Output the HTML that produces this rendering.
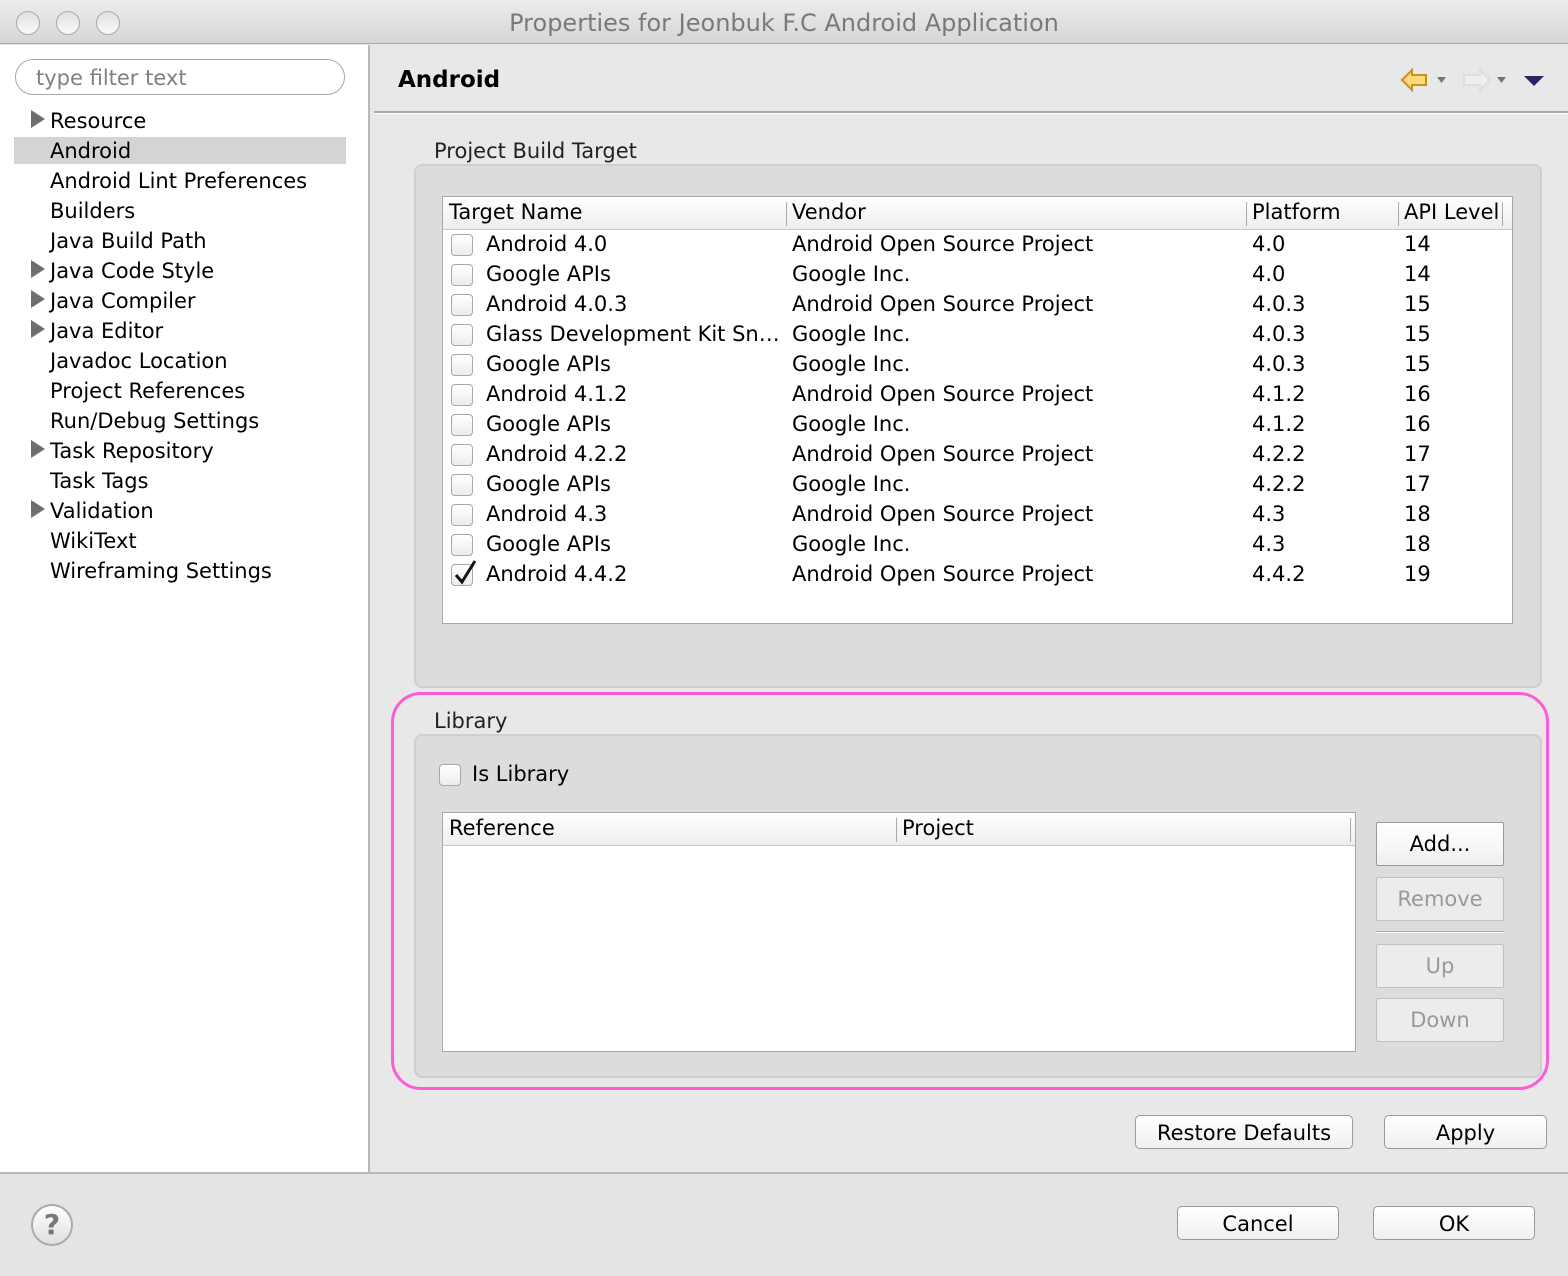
<!DOCTYPE html>
<html><head><style>
*{box-sizing:border-box;margin:0;padding:0}
body{width:1568px;height:1276px;background:#e8e8e8;font-family:"DejaVu Sans","Liberation Sans",sans-serif;font-size:20px;color:#000;position:relative;overflow:hidden}
.a{position:absolute;white-space:nowrap}
.cb{position:absolute;width:22px;height:22px;border:1px solid #a8a8a8;border-radius:4px;background:linear-gradient(#fff,#ececec)}
.btn{position:absolute;height:34px;border:1px solid #9a9a9a;border-radius:5px;background:linear-gradient(#fff,#f0f0f0);text-align:center;line-height:34px;font-size:21px}
.dis{color:#999;border-color:#c0c0c0;background:#ececec}
.tri{position:absolute;width:0;height:0;border-top:9px solid transparent;border-bottom:9px solid transparent;border-left:14px solid #6e6e6e}
</style></head><body>
<div class="a" style="left:0;top:0;width:1568px;height:44px;background:linear-gradient(#ececec,#d6d6d6);border-bottom:1px solid #aaa"></div>
<div class="a" style="left:16px;top:11px;width:24px;height:24px;border-radius:50%;border:1px solid #a9a9a9;background:linear-gradient(#e0e0e0,#fafafa)"></div>
<div class="a" style="left:56px;top:11px;width:24px;height:24px;border-radius:50%;border:1px solid #a9a9a9;background:linear-gradient(#e0e0e0,#fafafa)"></div>
<div class="a" style="left:96px;top:11px;width:24px;height:24px;border-radius:50%;border:1px solid #a9a9a9;background:linear-gradient(#e0e0e0,#fafafa)"></div>
<div class="a" style="left:0;width:1568px;top:9px;text-align:center;font-size:24px;color:#7a7a7a">Properties for Jeonbuk F.C Android Application</div>

<div class="a" style="left:0;top:45px;width:370px;height:1127px;background:#fff;border-right:2px solid #b8b8b8"></div>
<div class="a" style="left:15px;top:59px;width:330px;height:36px;border:1px solid #a8a8a8;border-radius:18px;background:#fff"></div>
<div class="a" style="left:36px;top:66px;font-size:21px;color:#808080">type filter text</div>
<div class="a" style="left:14px;top:137px;width:332px;height:27px;background:#d4d4d4"></div>
<div class="tri" style="left:31px;top:110px"></div>
<div class="tri" style="left:31px;top:260px"></div>
<div class="tri" style="left:31px;top:290px"></div>
<div class="tri" style="left:31px;top:320px"></div>
<div class="tri" style="left:31px;top:440px"></div>
<div class="tri" style="left:31px;top:500px"></div>
<div class="a" style="left:50px;top:106px;line-height:30px;font-size:21px">Resource<br>Android<br>Android Lint Preferences<br>Builders<br>Java Build Path<br>Java Code Style<br>Java Compiler<br>Java Editor<br>Javadoc Location<br>Project References<br>Run/Debug Settings<br>Task Repository<br>Task Tags<br>Validation<br>WikiText<br>Wireframing Settings</div>

<div class="a" style="left:398px;top:67px;font-size:23px;font-weight:bold">Android</div>
<div class="a" style="left:374px;top:111px;width:1194px;height:3px;border-top:2px solid #a8a8a8;border-bottom:1px solid #fff"></div>
<svg class="a" style="left:1398px;top:64px" width="160" height="32"><path d="M4 16 L14 6 V11 H28 V21 H14 V26 Z" fill="#ffd97a" stroke="#c89020" stroke-width="2"/><path d="M39 13 h9 l-4.5 6z" fill="#777"/><path d="M92 16 L82 6 V11 H66 V21 H82 V26 Z" fill="#eee" stroke="#ddd" stroke-width="2"/><path d="M99 13 h9 l-4.5 6z" fill="#777"/><path d="M126 12 h20 l-10 10z" fill="#2a2560"/></svg>

<div class="a" style="left:434px;top:139px;font-size:21px;color:#222">Project Build Target</div>
<div class="a" style="left:414px;top:164px;width:1128px;height:524px;border:2px solid #cfcfcf;border-radius:8px;background:#dcdcdc"></div>
<div class="a" style="left:442px;top:196px;width:1071px;height:428px;border:1px solid #a8a8a8;background:#fff"></div>
<div class="a" style="left:443px;top:197px;width:1069px;height:33px;background:linear-gradient(#fff,#eee);border-bottom:1px solid #c8c8c8"></div>
<div class="a" style="left:786px;top:202px;width:1px;height:24px;background:#aaa"></div>
<div class="a" style="left:1246px;top:202px;width:1px;height:24px;background:#aaa"></div>
<div class="a" style="left:1398px;top:202px;width:1px;height:24px;background:#aaa"></div>
<div class="a" style="left:1502px;top:202px;width:1px;height:24px;background:#aaa"></div>
<div class="a" style="left:449px;top:200px;font-size:21px">Target Name</div>
<div class="a" style="left:792px;top:200px;font-size:21px">Vendor</div>
<div class="a" style="left:1252px;top:200px;font-size:21px">Platform</div>
<div class="a" style="left:1404px;top:200px;font-size:21px">API Level</div>
<div class="cb" style="left:451px;top:234px"></div><div class="cb" style="left:451px;top:264px"></div><div class="cb" style="left:451px;top:294px"></div><div class="cb" style="left:451px;top:324px"></div><div class="cb" style="left:451px;top:354px"></div><div class="cb" style="left:451px;top:384px"></div><div class="cb" style="left:451px;top:414px"></div><div class="cb" style="left:451px;top:444px"></div><div class="cb" style="left:451px;top:474px"></div><div class="cb" style="left:451px;top:504px"></div><div class="cb" style="left:451px;top:534px"></div><div class="cb" style="left:451px;top:564px"></div>
<svg class="a" style="left:451px;top:558px" width="28" height="28"><path d="M5 17 L11 24 L24 3" fill="none" stroke="#111" stroke-width="3"/></svg>
<div class="a" style="left:486px;top:229px;line-height:30px;font-size:21px">Android 4.0<br>Google APIs<br>Android 4.0.3<br>Glass Development Kit Sn…<br>Google APIs<br>Android 4.1.2<br>Google APIs<br>Android 4.2.2<br>Google APIs<br>Android 4.3<br>Google APIs<br>Android 4.4.2</div>
<div class="a" style="left:792px;top:229px;line-height:30px;font-size:21px">Android Open Source Project<br>Google Inc.<br>Android Open Source Project<br>Google Inc.<br>Google Inc.<br>Android Open Source Project<br>Google Inc.<br>Android Open Source Project<br>Google Inc.<br>Android Open Source Project<br>Google Inc.<br>Android Open Source Project</div>
<div class="a" style="left:1252px;top:229px;line-height:30px;font-size:21px">4.0<br>4.0<br>4.0.3<br>4.0.3<br>4.0.3<br>4.1.2<br>4.1.2<br>4.2.2<br>4.2.2<br>4.3<br>4.3<br>4.4.2</div>
<div class="a" style="left:1404px;top:229px;line-height:30px;font-size:21px">14<br>14<br>15<br>15<br>15<br>16<br>16<br>17<br>17<br>18<br>18<br>19</div>

<div class="a" style="left:434px;top:709px;font-size:21px;color:#222">Library</div>
<div class="a" style="left:414px;top:734px;width:1128px;height:344px;border:2px solid #cfcfcf;border-radius:8px;background:#dcdcdc"></div>
<div class="cb" style="left:439px;top:764px"></div>
<div class="a" style="left:472px;top:762px;font-size:21px">Is Library</div>
<div class="a" style="left:442px;top:812px;width:914px;height:240px;border:1px solid #a8a8a8;background:#fff"></div>
<div class="a" style="left:443px;top:813px;width:912px;height:33px;background:linear-gradient(#fff,#eee);border-bottom:1px solid #c8c8c8"></div>
<div class="a" style="left:896px;top:818px;width:1px;height:24px;background:#aaa"></div>
<div class="a" style="left:1350px;top:818px;width:1px;height:24px;background:#aaa"></div>
<div class="a" style="left:449px;top:816px;font-size:21px">Reference</div>
<div class="a" style="left:902px;top:816px;font-size:21px">Project</div>
<div class="btn" style="left:1376px;top:822px;width:128px;height:44px;line-height:42px;border-radius:2px">Add...</div>
<div class="btn dis" style="left:1376px;top:877px;width:128px;height:44px;line-height:42px;border-radius:2px">Remove</div>
<div class="a" style="left:1376px;top:931px;width:128px;height:2px;border-top:1px solid #aaa;border-bottom:1px solid #fff"></div>
<div class="btn dis" style="left:1376px;top:944px;width:128px;height:44px;line-height:42px;border-radius:2px">Up</div>
<div class="btn dis" style="left:1376px;top:998px;width:128px;height:44px;line-height:42px;border-radius:2px">Down</div>
<div class="a" style="left:391px;top:692px;width:1158px;height:398px;border:3px solid #ff5bd6;border-radius:30px"></div>

<div class="btn" style="left:1135px;top:1115px;width:218px">Restore Defaults</div>
<div class="btn" style="left:1384px;top:1115px;width:163px">Apply</div>

<div class="a" style="left:0;top:1172px;width:1568px;height:104px;background:#e4e4e4;border-top:2px solid #b8b8b8"></div>
<div class="a" style="left:31px;top:1204px;width:42px;height:42px;border-radius:50%;border:2px solid #aaa;background:linear-gradient(#fff,#e0e0e0);text-align:center;line-height:38px;font-size:28px;color:#777;font-weight:bold">?</div>
<div class="btn" style="left:1177px;top:1206px;width:162px">Cancel</div>
<div class="btn" style="left:1373px;top:1206px;width:162px">OK</div>
</body></html>
